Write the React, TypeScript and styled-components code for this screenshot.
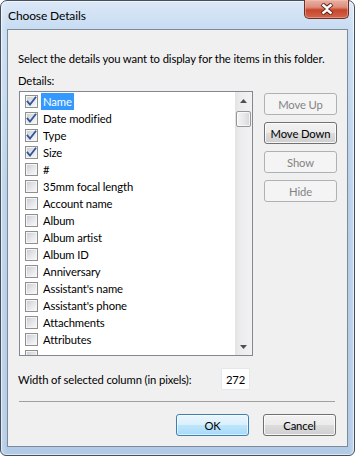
import React from 'react';
import styled, { createGlobalStyle, css } from 'styled-components';

const GlobalStyle = createGlobalStyle`
	html, body {
		margin: 0;
		padding: 0;
		background: #ffffff;
	}
	body {
		font-family: Lato, 'Liberation Sans', sans-serif;
		font-size: 11.25px;
		letter-spacing: -0.12px;
		color: #000000;
	}
`;

const columns = [
	{ name: 'Name', checked: true, selected: true },
	{ name: 'Date modified', checked: true },
	{ name: 'Type', checked: true },
	{ name: 'Size', checked: true },
	{ name: '#' },
	{ name: '35mm focal length' },
	{ name: 'Account name' },
	{ name: 'Album' },
	{ name: 'Album artist' },
	{ name: 'Album ID' },
	{ name: 'Anniversary' },
	{ name: "Assistant's name" },
	{ name: "Assistant's phone" },
	{ name: 'Attachments' },
	{ name: 'Attributes' },
	// only the top of the next checkbox peeks out below the last row
	{ name: '' },
];

const sideButtons = [
	{ label: 'Move Up', disabled: true },
	{ label: 'Move Down' },
	{ label: 'Show', disabled: true },
	{ label: 'Hide', disabled: true },
];

const Checkbox = ({ checked }: { checked?: boolean }) => (
	<CheckBox>
		<CheckInner>
			{checked && (
				<svg width='11' height='11' viewBox='0 0 11 11'>
					<path
						d='M1.5 5.5 L4 8.5 L9.5 1.5'
						fill='none'
						stroke='#34549a'
						strokeWidth='1.8'
						strokeLinecap='square'
					/>
				</svg>
			)}
		</CheckInner>
	</CheckBox>
);

const Arrow = ({ down }: { down?: boolean }) => (
	<svg width='7' height='4' viewBox='0 0 7 4'>
		<path d={down ? 'M0 0 H7 L3.5 4 Z' : 'M0 4 H7 L3.5 0 Z'} fill='#505050' />
	</svg>
);

export default function App() {
	return (
		<>
			<GlobalStyle />
			<Window>
				<TitleBar>
					<Title>Choose Details</Title>
					<CloseButton aria-label='Close'>
						<svg width='14' height='12' viewBox='0 0 14 12'>
							<path
								d='M2 1 L7 5 L12 1 M2 11 L7 7 L12 11'
								fill='none'
								stroke='#5a2218'
								strokeWidth='4.2'
							/>
							<path
								d='M2.5 1.5 L7 5.2 L11.5 1.5 M2.5 10.5 L7 6.8 L11.5 10.5'
								fill='none'
								stroke='#ffffff'
								strokeWidth='2.4'
							/>
						</svg>
					</CloseButton>
				</TitleBar>
				<Client>
					<Intro>
						Select the details you want to display for the items in
						this folder.
					</Intro>
					<Label>Details:</Label>
					<MainRow>
						<ListBox>
							<Rows>
								{columns.map((col, i) => (
									<Row key={i}>
										<Checkbox checked={col.checked} />
										{col.name && (
											<ItemText selected={col.selected}>
												{col.name}
											</ItemText>
										)}
									</Row>
								))}
							</Rows>
							<ScrollBar>
								<ScrollArrow>
									<Arrow />
								</ScrollArrow>
								<Thumb />
								<Track />
								<ScrollArrow>
									<Arrow down />
								</ScrollArrow>
							</ScrollBar>
						</ListBox>
						<SideButtons>
							{sideButtons.map(b => (
								<Button key={b.label} disabled={b.disabled}>
									{b.label}
								</Button>
							))}
						</SideButtons>
					</MainRow>
					<WidthRow>
						<span>Width of selected column (in pixels):</span>
						<WidthInput>272</WidthInput>
					</WidthRow>
					<Separator />
					<Footer>
						<Button primary>OK</Button>
						<Button>Cancel</Button>
					</Footer>
				</Client>
			</Window>
		</>
	);
}

const Window = styled.div`
	width: 355px;
	height: 456px;
	box-sizing: border-box;
	display: flex;
	flex-direction: column;
	padding: 0 6px 8px 6px;
	border: 1px solid #44505e;
	border-radius: 7px 7px 6px 6px;
	background:
		linear-gradient(
			to right,
			rgba(255, 255, 255, 0.25) 0,
			rgba(255, 255, 255, 0) 6px,
			rgba(255, 255, 255, 0) 348px,
			rgba(255, 255, 255, 0.25) 353px
		),
		linear-gradient(to bottom, #dbe8f7 0, #c8dcf2 28px, #b8cfea 200px, #b2cae6 100%);
	box-shadow: inset 0 0 0 1px rgba(255, 255, 255, 0.55);
`;

const TitleBar = styled.div`
	height: 28px;
	display: flex;
	justify-content: space-between;
	align-items: flex-start;
	padding-left: 1px;
`;

const Title = styled.div`
	margin-top: 7px;
	font-size: 12px;
	line-height: 15px;
	color: #000000;
`;

const CloseButton = styled.div`
	width: 45px;
	height: 19px;
	margin-top: -1px;
	margin-right: -1px;
	box-sizing: border-box;
	display: flex;
	align-items: center;
	justify-content: center;
	border: 1px solid #6b2f25;
	border-top: none;
	border-radius: 0 0 5px 5px;
	background: linear-gradient(to bottom, #e9b1a4 0, #dc8e7c 40%, #c9452c 55%, #d0664a 100%);
	box-shadow: inset 0 0 0 1px rgba(255, 200, 190, 0.45);
`;

const Client = styled.div`
	flex: 1;
	display: flex;
	flex-direction: column;
	padding: 21px 10px 0 10px;
	border: 1px solid #7d8a99;
	background: #f0f0f0;
`;

const Intro = styled.div`
	line-height: 15px;
	white-space: nowrap;
`;

const Label = styled.div`
	margin-top: 7px;
	line-height: 15px;
`;

const MainRow = styled.div`
	margin-top: 3px;
	display: flex;
	gap: 11px;
`;

const ListBox = styled.div`
	width: 234px;
	height: 265px;
	box-sizing: border-box;
	margin-left: 1px;
	display: flex;
	border: 1px solid #828790;
	background: #ffffff;
	overflow: hidden;
`;

const Rows = styled.div`
	flex: 1;
	padding: 1px 0 0 5px;
	overflow: hidden;
`;

const Row = styled.div`
	height: 17px;
	display: flex;
	align-items: center;
	gap: 3px;
`;

const CheckBox = styled.div`
	width: 13px;
	height: 13px;
	box-sizing: border-box;
	padding: 1px;
	border: 1px solid #8e8f8f;
	background: #f4f4f4;
`;

const CheckInner = styled.div`
	width: 9px;
	height: 9px;
	position: relative;
	background: linear-gradient(135deg, #cbcfd5 0, #e3e5e8 50%, #f7f7f7 100%);

	svg {
		position: absolute;
		left: -1px;
		top: -1px;
	}
`;

const ItemText = styled.span<{ selected?: boolean }>`
	height: 17px;
	line-height: 17px;
	padding: 0 2px;
	white-space: nowrap;
	${p =>
		p.selected &&
		css`
			background: #3399ff;
			color: #ffffff;
		`}
`;

const ScrollBar = styled.div`
	width: 17px;
	display: flex;
	flex-direction: column;
	align-items: center;
	background: linear-gradient(to right, #e3e3e3 0, #ececec 30%, #f2f2f2 100%);
`;

const ScrollArrow = styled.div`
	height: 17px;
	width: 17px;
	display: flex;
	align-items: center;
	justify-content: center;
`;

const Thumb = styled.div`
	width: 15px;
	height: 16px;
	margin-top: 2px;
	box-sizing: border-box;
	border: 1px solid #979797;
	border-radius: 2px;
	background: linear-gradient(to right, #f4f4f4 0, #e9e9e9 50%, #d6d6d6 100%);
	box-shadow: inset 0 0 0 1px rgba(255, 255, 255, 0.7);
`;

const Track = styled.div`
	flex: 1;
`;

const SideButtons = styled.div`
	margin-top: 2px;
	display: flex;
	flex-direction: column;
	gap: 7px;
`;

const Button = styled.button<{ disabled?: boolean; primary?: boolean }>`
	width: 73px;
	height: 22px;
	box-sizing: border-box;
	padding: 0;
	font-family: inherit;
	font-size: inherit;
	letter-spacing: inherit;
	color: #000000;
	border: 1px solid #707070;
	border-radius: 3px;
	background: linear-gradient(to bottom, #f2f2f2 0, #ebebeb 50%, #dddddd 50%, #cfcfcf 100%);
	box-shadow: inset 0 0 0 1px rgba(255, 255, 255, 0.8);
	${p =>
		p.disabled &&
		css`
			color: #838383;
			border-color: #adb2b5;
			background: #f4f4f4;
			box-shadow: none;
		`}
	${p =>
		p.primary &&
		css`
			border-color: #3c7fb1;
			background: linear-gradient(to bottom, #eaf6fd 0, #d9f0fc 50%, #bee6fd 50%, #a7d9f5 100%);
			box-shadow: inset 0 0 0 1px rgba(255, 255, 255, 0.6);
		`}
`;

const WidthRow = styled.div`
	margin-top: 12px;
	display: flex;
	align-items: center;
	justify-content: space-between;
	width: 232px;
`;

const WidthInput = styled.div`
	width: 29px;
	height: 22px;
	box-sizing: border-box;
	display: flex;
	align-items: center;
	justify-content: center;
	border: 1px solid #e3e9ef;
	background: #ffffff;
`;

const Separator = styled.div`
	margin: 11px 2px 0 1px;
	border-top: 1px solid #a0a0a0;
`;

const Footer = styled.div`
	margin-top: 12px;
	display: flex;
	justify-content: flex-end;
	gap: 14px;
	padding-right: 1px;
`;
